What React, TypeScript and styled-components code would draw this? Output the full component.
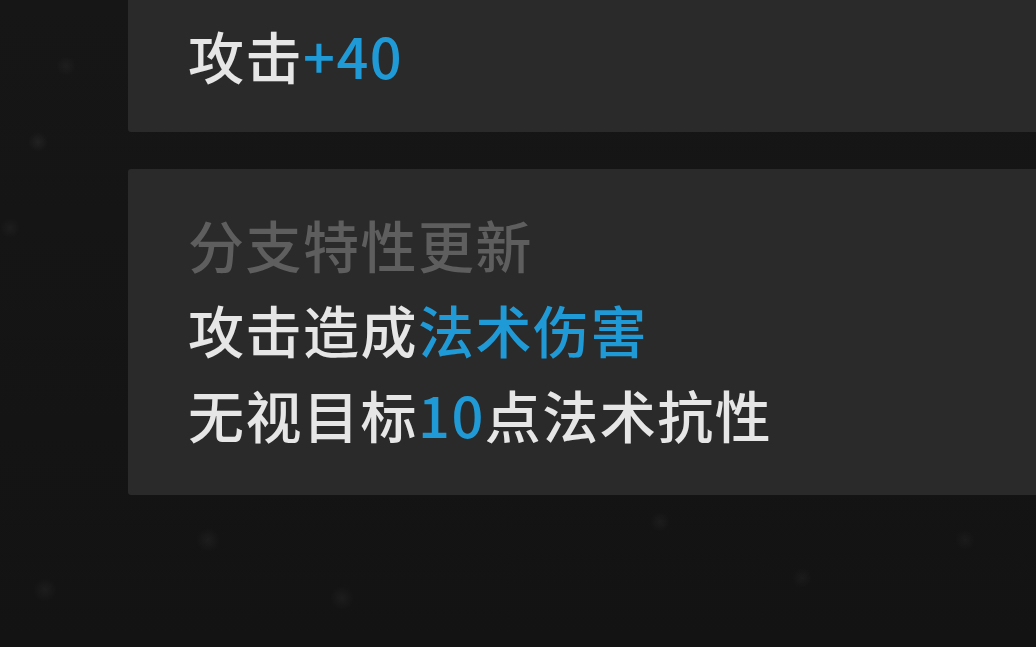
import styled, { createGlobalStyle } from "styled-components";

const GlobalStyle = createGlobalStyle`
  html, body {
    margin: 0;
    padding: 0;
    height: 100%;
    overflow: hidden;
  }
  body {
    background-color: #141414;
    background-image:
      radial-gradient(circle at 38px 142px, rgba(255,255,255,0.05) 0, transparent 10px),
      radial-gradient(circle at 66px 66px, rgba(255,255,255,0.035) 0, transparent 10px),
      radial-gradient(circle at 10px 228px, rgba(255,255,255,0.035) 0, transparent 10px),
      radial-gradient(circle at 45px 590px, rgba(255,255,255,0.04) 0, transparent 12px),
      radial-gradient(circle at 208px 540px, rgba(255,255,255,0.04) 0, transparent 12px),
      radial-gradient(circle at 342px 598px, rgba(255,255,255,0.04) 0, transparent 12px),
      radial-gradient(circle at 660px 522px, rgba(255,255,255,0.035) 0, transparent 10px),
      radial-gradient(circle at 802px 578px, rgba(255,255,255,0.03) 0, transparent 10px),
      radial-gradient(circle at 965px 540px, rgba(255,255,255,0.03) 0, transparent 10px),
      linear-gradient(180deg, #161616 0%, #131313 100%);
    font-family: "Noto Sans CJK SC", "Noto Sans", sans-serif;
  }
`;

const Page = styled.main`
  display: flex;
  flex-direction: column;
  gap: 37px;
  padding-left: 128px;
  width: 100vw;
  height: 100vh;
  box-sizing: border-box;
`;

const Panel = styled.section<{ $top: number; $bottom: number }>`
  background: #2a2a2a;
  border-radius: 0 0 0 3px;
  padding: ${({ $top }) => $top}px 0 ${({ $bottom }) => $bottom}px 60px;
  display: flex;
  flex-direction: column;
  filter: blur(0.4px);

  & + & {
    border-radius: 3px 0 0 3px;
  }
`;

const Line = styled.div<{ $muted?: boolean }>`
  font-size: 56px;
  line-height: 85px;
  font-weight: 500;
  letter-spacing: 1.5px;
  white-space: nowrap;
  color: ${({ $muted }) => ($muted ? "#5e5e5e" : "#e6e6e6")};
`;

const Accent = styled.span`
  color: #1f9ad6;
`;

export default function App() {
  return (
    <>
      <GlobalStyle />
      <Page>
        <Panel $top={12} $bottom={35}>
          <Line>
            攻击<Accent>+40</Accent>
          </Line>
        </Panel>
        <Panel $top={32} $bottom={39}>
          <Line $muted>分支特性更新</Line>
          <Line>
            攻击造成<Accent>法术伤害</Accent>
          </Line>
          <Line>
            无视目标<Accent>10</Accent>点法术抗性
          </Line>
        </Panel>
      </Page>
    </>
  );
}
